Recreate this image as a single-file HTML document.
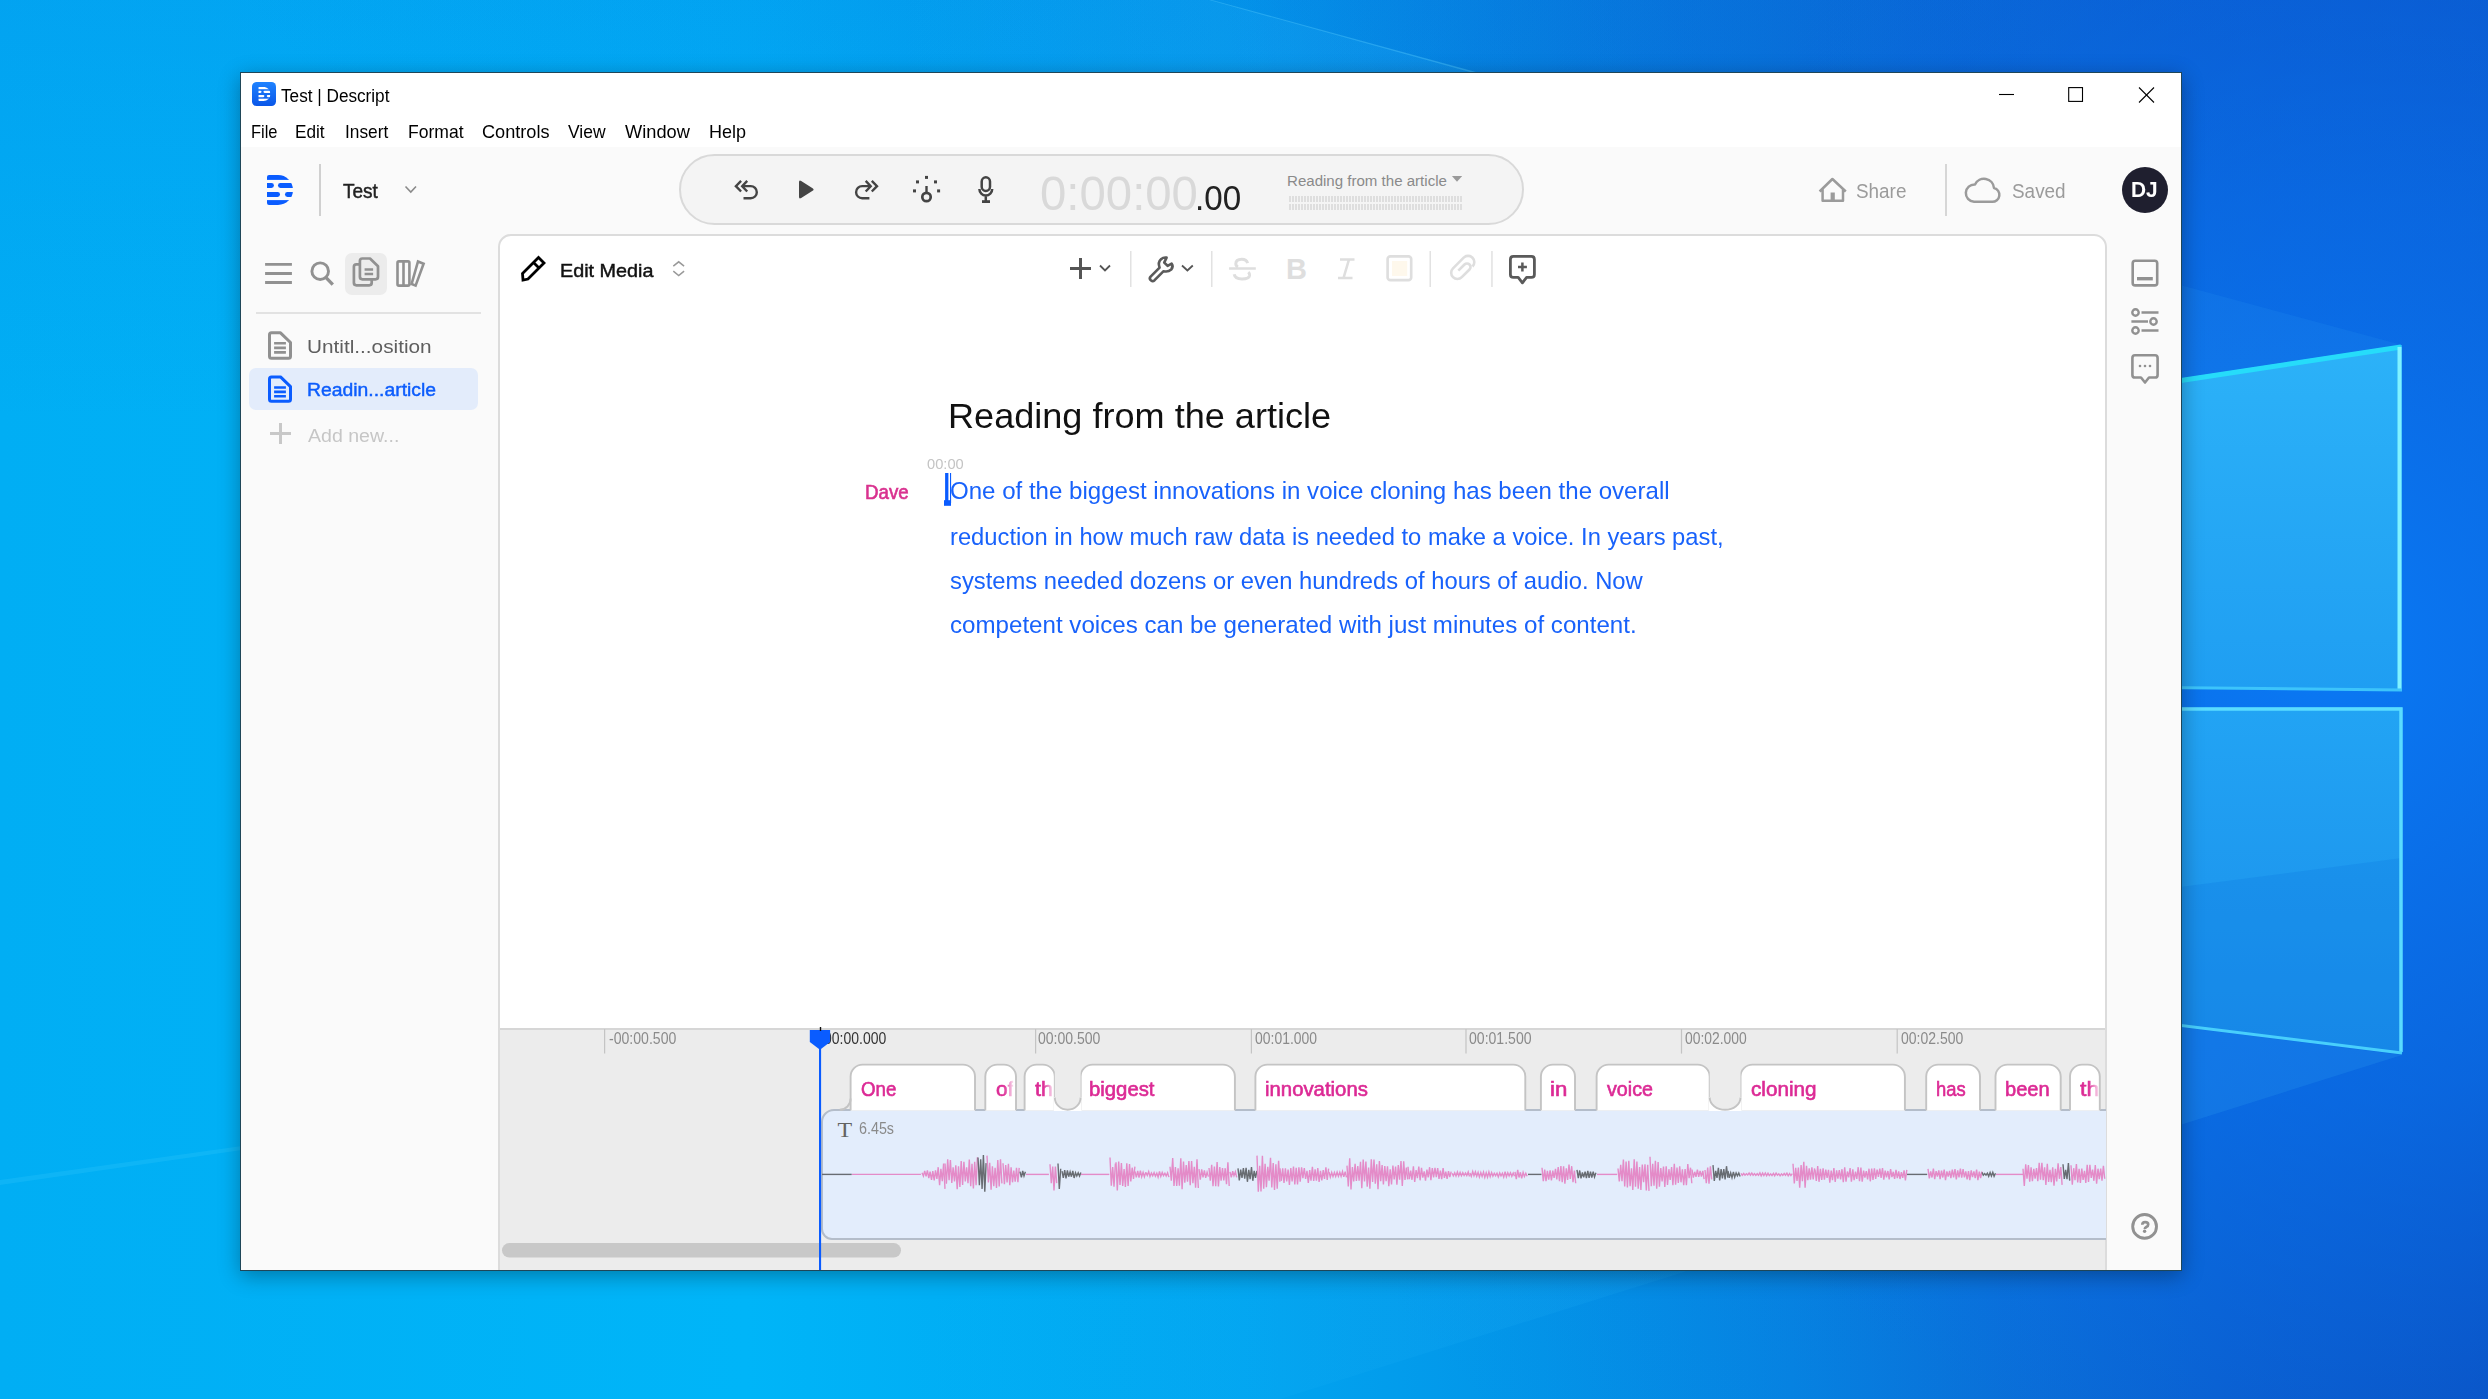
<!DOCTYPE html>
<html><head><meta charset="utf-8">
<style>
*{box-sizing:border-box;margin:0;padding:0}
html,body{width:2488px;height:1399px;overflow:hidden}
body{position:relative;font-family:"Liberation Sans",sans-serif;background:#0a7ede}
.a{position:absolute}
.t{position:absolute;white-space:nowrap;line-height:1;transform-origin:0 0;font-family:"Liberation Sans",sans-serif}
#wall{position:absolute;left:0;top:0;width:2488px;height:1399px;overflow:hidden;
background:linear-gradient(to right,#03a2ec 0%,#01aaf0 20%,#02a6ee 45%,#0496e8 60%,#0878dc 75%,#0a5fd0 88%,#0a55c8 100%)}
#frame{position:absolute;left:240px;top:72px;width:1942px;height:1199px;background:#fafafa;border:1px solid #1f4658;box-shadow:0 5px 20px rgba(0,0,0,0.32)}
#clip{position:absolute;left:241px;top:73px;width:1940px;height:1197px;overflow:hidden}
#app{position:absolute;left:-241px;top:-73px;width:2488px;height:1399px}
svg{position:absolute;overflow:visible}
</style></head>
<body>
<div id="wall"><svg width="2488" height="1399" viewBox="0 0 2488 1399" style="left:0;top:0">
<defs>
<linearGradient id="gbase" x1="0" y1="0" x2="1" y2="0">
 <stop offset="0" stop-color="#01aef4"/>
 <stop offset="0.3" stop-color="#00b5f8"/>
 <stop offset="0.5" stop-color="#01a5f0"/>
 <stop offset="0.62" stop-color="#0394e8"/>
 <stop offset="0.72" stop-color="#0684e2"/>
 <stop offset="0.82" stop-color="#0a6ed8"/>
 <stop offset="0.9" stop-color="#0a5ecf"/>
 <stop offset="1" stop-color="#0a52c4"/>
</linearGradient>
<linearGradient id="gray2" x1="900" y1="0" x2="1500" y2="0" gradientUnits="userSpaceOnUse">
 <stop offset="0" stop-color="#30c0ff" stop-opacity="0"/>
 <stop offset="1" stop-color="#30c0ff" stop-opacity="0.10"/>
</linearGradient>
<linearGradient id="gray1" x1="900" y1="0" x2="1300" y2="0" gradientUnits="userSpaceOnUse">
 <stop offset="0" stop-color="#30c0ff" stop-opacity="0"/>
 <stop offset="1" stop-color="#30c0ff" stop-opacity="0.14"/>
</linearGradient>
<linearGradient id="gtop" x1="0" y1="0" x2="0" y2="1">
 <stop offset="0" stop-color="#0a6ae0" stop-opacity="0.16"/>
 <stop offset="0.3" stop-color="#0a6ae0" stop-opacity="0"/>
 <stop offset="1" stop-color="#0a6ae0" stop-opacity="0"/>
</linearGradient>
<linearGradient id="gdiag" x1="2488" y1="0" x2="900" y2="1399" gradientUnits="userSpaceOnUse">
 <stop offset="0" stop-color="#0a5cd0" stop-opacity="0.3"/>
 <stop offset="0.45" stop-color="#0a60d0" stop-opacity="0.16"/>
 <stop offset="0.8" stop-color="#0a60d0" stop-opacity="0"/>
</linearGradient>
<radialGradient id="gtr" cx="2300" cy="-200" r="1100" gradientUnits="userSpaceOnUse">
 <stop offset="0" stop-color="#0a50c8" stop-opacity="0.5"/>
 <stop offset="0.6" stop-color="#0a58cc" stop-opacity="0.3"/>
 <stop offset="1" stop-color="#0a58cc" stop-opacity="0"/>
</radialGradient>
<radialGradient id="glight" cx="2330" cy="650" r="820" gradientUnits="userSpaceOnUse">
 <stop offset="0" stop-color="#0a7cf8" stop-opacity="0.9"/>
 <stop offset="0.55" stop-color="#0a74f2" stop-opacity="0.55"/>
 <stop offset="1" stop-color="#0a70ee" stop-opacity="0"/>
</radialGradient>
<linearGradient id="gpane1" x1="0" y1="0" x2="0" y2="1">
 <stop offset="0" stop-color="#2cb2f8"/>
 <stop offset="1" stop-color="#1f9ef2"/>
</linearGradient>
<linearGradient id="gpane2" x1="0" y1="0" x2="0" y2="1">
 <stop offset="0" stop-color="#22a4f4"/>
 <stop offset="1" stop-color="#1a8eea"/>
</linearGradient>
</defs>
<rect width="2488" height="1399" fill="url(#gbase)"/>
<rect width="2488" height="1399" fill="url(#gdiag)"/>
<rect width="2488" height="1399" fill="url(#gtr)"/>
<rect width="2488" height="1399" fill="url(#glight)"/>
<rect width="2488" height="1399" fill="url(#gtop)"/>
<!-- right side deep blue -->

<!-- rays -->
<polygon points="1209,0 1474,72 900,72 800,0" fill="url(#gray1)"/>
<polygon points="1209,0 1212,0 1476,72 1470,72" fill="#5fd0ff" opacity="0.35"/>
<polygon points="1280,1399 1690,1270 1000,1270 800,1399" fill="url(#gray2)"/>
<polygon points="2180,285 2402,345 2402,360 2180,400" fill="#2a9af0" opacity="0.16"/>
<polygon points="0,1180 242,1146 242,1150 0,1185" fill="#50d4ff" opacity="0.18"/>
<!-- windows logo panes -->
<polygon points="2000,406 2402,345 2402,690.5 2000,684" fill="url(#gpane1)"/>
<polygon points="2000,708 2402,707 2402,1053.8 2000,1002" fill="url(#gpane2)"/>
<polygon points="2180,887 2402,858 2402,1053.8 2180,1025" fill="#0a70e0" opacity="0.22"/>
<polygon points="2180,1027 2402,1055 2180,1125" fill="#2a9af0" opacity="0.25"/>
<!-- bright edges -->
<polyline points="2000,408 2401,347" fill="none" stroke="#26dcfa" stroke-width="5"/>
<polyline points="2399.5,347 2399.5,690" fill="none" stroke="#80f2ff" stroke-width="4"/>
<polyline points="2000,686 2402,690" fill="none" stroke="#3cc4fb" stroke-width="3"/>
<polyline points="2000,709 2401,709 2401,1052" fill="none" stroke="#5adcff" stroke-width="3.5"/>
<polyline points="2000,1003 2402,1053" fill="none" stroke="#48cffc" stroke-width="3"/>
</svg></div>
<div id="frame"></div>
<div id="clip"><div id="app">
  <div class="a" style="left:241px;top:73px;width:1940px;height:74px;background:#fff"></div>
  <div class="a" style="left:241px;top:147px;width:1940px;height:1130px;background:#fafafa"></div>
  <!-- transport pill -->
  <div class="a" style="left:679px;top:154px;width:845px;height:71px;background:#f4f4f4;border:2px solid #d9d9d9;border-radius:36px"></div>
  <div class="a" style="left:1289px;top:196px;width:174px;height:5.9px;background:repeating-linear-gradient(to right,#dedede 0,#dedede 2px,transparent 2px,transparent 3px)"></div><div class="a" style="left:1289px;top:204.2px;width:174px;height:5.7px;background:repeating-linear-gradient(to right,#dedede 0,#dedede 2px,transparent 2px,transparent 3px)"></div>
  <!-- editor panel -->
  <div class="a" style="left:498px;top:234px;width:1609px;height:1060px;background:#fff;border:2px solid #dcdcdc;border-radius:13px 13px 0 0;overflow:hidden">
    <div class="a" style="left:0;top:792px;width:1607px;height:300px;background:#ececec;border-top:2px solid #d6d6d6"></div>
  </div>
  <!-- sidebar divider -->
  <div class="a" style="left:256px;top:312px;width:225px;height:2px;background:#e2e2e2"></div>
  <div class="a" style="left:249px;top:368px;width:229px;height:42px;background:#e3ecfb;border-radius:7px"></div>
  <div class="a" style="left:345px;top:253px;width:42px;height:42px;background:#ececec;border-radius:7px"></div>
  <!-- header dividers -->
  <div class="a" style="left:319px;top:164px;width:2px;height:52px;background:#d0d0d0"></div>
  <div class="a" style="left:1945px;top:164px;width:2px;height:52px;background:#d6d6d6"></div>
  <div class="a" style="left:2122px;top:167px;width:46px;height:46px;border-radius:50%;background:#1f1f2f"></div>
<svg width="2488" height="1399" viewBox="0 0 2488 1399" style="left:0;top:0">
<defs><clipPath id="tlclip"><rect x="500" y="1029" width="1606" height="245"/></clipPath></defs>
<g clip-path="url(#tlclip)">
<g stroke="#c4c4c4" stroke-width="1.2"><line x1="604.6" y1="1029" x2="604.6" y2="1053.6"/><line x1="1035.6" y1="1029" x2="1035.6" y2="1053.6"/><line x1="1251.4" y1="1029" x2="1251.4" y2="1053.6"/><line x1="1466" y1="1029" x2="1466" y2="1053.6"/><line x1="1681.5" y1="1029" x2="1681.5" y2="1053.6"/><line x1="1897.2" y1="1029" x2="1897.2" y2="1053.6"/></g>
<path d="M822,1229 V1122 A12,12 0 0 1 834,1110 H2120 V1239 H832 A10,10 0 0 1 822,1229 Z" fill="#e3edfc" stroke="#b4bdca" stroke-width="2"/>
<path d="M850.6,1110.8 V1076.6 A12,12 0 0 1 862.6,1064.6 H963.0 A12,12 0 0 1 975.0,1076.6 V1110.8 Z M985.3,1110.8 V1076.6 A12,12 0 0 1 997.3,1064.6 H1004.0 A12,12 0 0 1 1016.0,1076.6 V1110.8 Z M1024.6,1110.8 V1076.6 A12,12 0 0 1 1036.6,1064.6 H1042.8 A12,12 0 0 1 1054.8,1076.6 V1110.8 Z M1080.6,1110.8 V1076.6 A12,12 0 0 1 1092.6,1064.6 H1222.9 A12,12 0 0 1 1234.9,1076.6 V1110.8 Z M1255.4,1110.8 V1076.6 A12,12 0 0 1 1267.4,1064.6 H1513.3 A12,12 0 0 1 1525.3,1076.6 V1110.8 Z M1540.9,1110.8 V1076.6 A12,12 0 0 1 1552.9,1064.6 H1563.0 A12,12 0 0 1 1575.0,1076.6 V1110.8 Z M1596.6,1110.8 V1076.6 A12,12 0 0 1 1608.6,1064.6 H1697.7 A12,12 0 0 1 1709.7,1076.6 V1110.8 Z M1740.5,1110.8 V1076.6 A12,12 0 0 1 1752.5,1064.6 H1892.9 A12,12 0 0 1 1904.9,1076.6 V1110.8 Z M1926.2,1110.8 V1076.6 A12,12 0 0 1 1938.2,1064.6 H1968.0 A12,12 0 0 1 1980.0,1076.6 V1110.8 Z M1995.5,1110.8 V1076.6 A12,12 0 0 1 2007.5,1064.6 H2048.7 A12,12 0 0 1 2060.7,1076.6 V1110.8 Z M2070.0,1110.8 V1076.6 A12,12 0 0 1 2082.0,1064.6 H2087.8 A12,12 0 0 1 2099.8,1076.6 V1110.8 Z" fill="#fff"/>
<path d="M850.6,1110.3 V1076.6 A12,12 0 0 1 862.6,1064.6 H963.0 A12,12 0 0 1 975.0,1076.6 V1110.3 M985.3,1110.3 V1076.6 A12,12 0 0 1 997.3,1064.6 H1004.0 A12,12 0 0 1 1016.0,1076.6 V1110.3 M1024.6,1110.3 V1076.6 A12,12 0 0 1 1036.6,1064.6 H1042.8 A12,12 0 0 1 1054.8,1076.6 V1110.3 M1080.6,1110.3 V1076.6 A12,12 0 0 1 1092.6,1064.6 H1222.9 A12,12 0 0 1 1234.9,1076.6 V1110.3 M1255.4,1110.3 V1076.6 A12,12 0 0 1 1267.4,1064.6 H1513.3 A12,12 0 0 1 1525.3,1076.6 V1110.3 M1540.9,1110.3 V1076.6 A12,12 0 0 1 1552.9,1064.6 H1563.0 A12,12 0 0 1 1575.0,1076.6 V1110.3 M1596.6,1110.3 V1076.6 A12,12 0 0 1 1608.6,1064.6 H1697.7 A12,12 0 0 1 1709.7,1076.6 V1110.3 M1740.5,1110.3 V1076.6 A12,12 0 0 1 1752.5,1064.6 H1892.9 A12,12 0 0 1 1904.9,1076.6 V1110.3 M1926.2,1110.3 V1076.6 A12,12 0 0 1 1938.2,1064.6 H1968.0 A12,12 0 0 1 1980.0,1076.6 V1110.3 M1995.5,1110.3 V1076.6 A12,12 0 0 1 2007.5,1064.6 H2048.7 A12,12 0 0 1 2060.7,1076.6 V1110.3 M2070.0,1110.3 V1076.6 A12,12 0 0 1 2082.0,1064.6 H2087.8 A12,12 0 0 1 2099.8,1076.6 V1110.3" fill="none" stroke="#c4c4c4" stroke-width="1.9"/>
<path d="M850.6,1098.5 A11,11 0 0 1 839.6,1109.8" fill="none" stroke="#c4c4c4" stroke-width="1.9"/>
<rect x="1053.8" y="1097" width="27.8" height="14" fill="#fff"/><path d="M1054.8,1060 V1097.5 A12.9,12.3 0 0 0 1080.6,1097.5 V1060 Z" fill="#ececec"/><path d="M1054.8,1097.5 A12.9,12.3 0 0 0 1080.6,1097.5" fill="none" stroke="#c4c4c4" stroke-width="1.9"/>
<rect x="1708.7" y="1097" width="32.8" height="14" fill="#fff"/><path d="M1709.7,1060 V1097.5 A15.4,12.3 0 0 0 1740.5,1097.5 V1060 Z" fill="#ececec"/><path d="M1709.7,1097.5 A15.4,12.3 0 0 0 1740.5,1097.5" fill="none" stroke="#c4c4c4" stroke-width="1.9"/>
<text x="837.5" y="1136.7" font-family="Liberation Serif" font-size="20.5" fill="#626262" transform="translate(837.5,0) scale(1.17,1) translate(-837.5,0)">T</text>
<path d="M822.0,1174.4 L823.4,1174.4 L824.7,1174.4 L826.1,1174.4 L827.4,1174.4 L828.8,1174.4 L830.1,1174.4 L831.5,1174.4 L832.8,1174.4 L834.2,1174.4 L835.5,1174.4 L836.9,1174.4 L838.2,1174.4 L839.6,1174.4 L840.9,1174.4 L842.3,1174.4 L843.6,1174.4 L845.0,1174.4 L846.3,1174.4 L847.7,1174.4 L849.0,1174.4 L850.4,1174.4 L851.7,1174.4" stroke="#686c72" stroke-width="1.4" fill="none"/>
<path d="M852.0,1174.4 L853.4,1174.4 L854.7,1174.4 L856.1,1174.4 L857.4,1174.4 L858.8,1174.4 L860.1,1174.4 L861.5,1174.4 L862.8,1174.4 L864.2,1174.4 L865.5,1174.4 L866.9,1174.4 L868.2,1174.4 L869.6,1174.4 L870.9,1174.4 L872.3,1174.4 L873.6,1174.4 L875.0,1174.4 L876.3,1174.4 L877.7,1174.4 L879.0,1174.4 L880.4,1174.4 L881.7,1174.4 L883.1,1174.4 L884.4,1174.4 L885.8,1174.4 L887.1,1174.4 L888.5,1174.4 L889.8,1174.4 L891.2,1174.4 L892.5,1174.4 L893.9,1174.4 L895.2,1174.4 L896.6,1174.4 L897.9,1174.4 L899.3,1174.4 L900.6,1174.4 L902.0,1174.4 L903.3,1174.4 L904.7,1174.4 L906.0,1174.4 L907.4,1174.4 L908.7,1174.4 L910.1,1174.4 L911.4,1174.4 L912.8,1174.4 L914.1,1174.4 L915.5,1174.4 L916.8,1174.4 L918.2,1174.4 L919.5,1174.4 L920.9,1174.4" stroke="#e48bc8" stroke-width="1.4" fill="none"/>
<path d="M922.0,1172.7 L923.4,1176.1 L924.7,1171.0 L926.1,1176.4 L927.4,1170.3 L928.8,1178.2 L930.1,1171.6 L931.5,1179.8 L932.8,1171.2 L934.2,1180.3 L935.5,1170.4 L936.9,1178.8 L938.2,1167.2 L939.6,1185.2 L940.9,1168.9 L942.3,1181.1 L943.6,1163.6 L945.0,1188.9" stroke="#e48bc8" stroke-width="1.4" fill="none"/>
<path d="M945.0,1163.5 L946.4,1183.6 L947.7,1159.2 L949.1,1180.3 L950.4,1160.0 L951.8,1183.0 L953.1,1167.2 L954.5,1181.4 L955.8,1165.2 L957.2,1189.2 L958.5,1166.4 L959.9,1187.0 L961.2,1161.0 L962.6,1184.9 L963.9,1161.8 L965.3,1181.5 L966.6,1167.3 L968.0,1183.3 L969.3,1159.6 L970.7,1186.3 L972.0,1163.8 L973.4,1188.5 L974.7,1161.8 L976.1,1185.1 L977.4,1157.2" stroke="#e48bc8" stroke-width="1.4" fill="none"/>
<path d="M978.0,1157.5 L979.4,1185.1 L980.7,1159.2 L982.1,1188.9 L983.4,1155.1 L984.8,1191.7 L986.1,1163.1" stroke="#686c72" stroke-width="1.4" fill="none"/>
<path d="M987.0,1155.6 L988.4,1182.4 L989.7,1162.9 L991.1,1189.8 L992.4,1166.3 L993.8,1186.2 L995.1,1167.8 L996.5,1187.9 L997.8,1160.0 L999.2,1186.5 L1000.5,1159.3 L1001.9,1183.4" stroke="#e48bc8" stroke-width="1.4" fill="none"/>
<path d="M1003.0,1163.2 L1004.4,1184.3 L1005.7,1165.0 L1007.1,1182.4 L1008.4,1163.8 L1009.8,1185.2 L1011.1,1167.4 L1012.5,1182.3 L1013.8,1170.7 L1015.2,1181.7 L1016.5,1167.9 L1017.9,1182.2 L1019.2,1167.9" stroke="#e48bc8" stroke-width="1.4" fill="none"/>
<path d="M1020.0,1171.7 L1021.4,1177.3 L1022.7,1170.8 L1024.0,1176.0 L1025.4,1171.7" stroke="#686c72" stroke-width="1.4" fill="none"/>
<path d="M1026.0,1174.4 L1027.3,1174.4 L1028.7,1174.4 L1030.0,1174.4 L1031.4,1174.4 L1032.7,1174.4 L1034.1,1174.4 L1035.4,1174.4 L1036.8,1174.4 L1038.1,1174.4 L1039.5,1174.4 L1040.8,1174.4 L1042.2,1174.4 L1043.5,1174.4 L1044.9,1174.4 L1046.2,1174.4 L1047.6,1174.4 L1048.9,1174.4" stroke="#e48bc8" stroke-width="1.4" fill="none"/>
<path d="M1050.0,1164.3 L1051.3,1183.3 L1052.7,1166.6 L1054.0,1190.5 L1055.4,1166.6 L1056.7,1183.1" stroke="#e48bc8" stroke-width="1.4" fill="none"/>
<path d="M1058.0,1163.5 L1059.3,1189.0 L1060.7,1168.8" stroke="#686c72" stroke-width="1.4" fill="none"/>
<path d="M1062.0,1171.2 L1063.3,1177.8 L1064.7,1170.0 L1066.0,1178.4 L1067.4,1170.4 L1068.7,1176.7 L1070.1,1171.8 L1071.4,1176.7 L1072.8,1170.8 L1074.1,1178.0 L1075.5,1172.8 L1076.8,1176.0 L1078.2,1172.8 L1079.5,1176.0 L1080.9,1172.4" stroke="#686c72" stroke-width="1.4" fill="none"/>
<path d="M1081.0,1174.4 L1082.3,1174.4 L1083.7,1174.4 L1085.0,1174.4 L1086.4,1174.4 L1087.7,1174.4 L1089.1,1174.4 L1090.4,1174.4 L1091.8,1174.4 L1093.1,1174.4 L1094.5,1174.4 L1095.8,1174.4 L1097.2,1174.4 L1098.5,1174.4 L1099.9,1174.4 L1101.2,1174.4 L1102.6,1174.4 L1103.9,1174.4 L1105.3,1174.4 L1106.6,1174.4 L1108.0,1174.4 L1109.3,1174.4" stroke="#e48bc8" stroke-width="1.4" fill="none"/>
<path d="M1110.0,1157.5 L1111.3,1185.8 L1112.7,1167.1 L1114.0,1186.6 L1115.4,1163.5" stroke="#e48bc8" stroke-width="1.4" fill="none"/>
<path d="M1116.0,1162.2 L1117.3,1190.4 L1118.7,1161.6 L1120.0,1185.0 L1121.4,1163.1 L1122.7,1185.9 L1124.1,1169.0 L1125.4,1187.0 L1126.8,1163.2 L1128.1,1185.9 L1129.5,1164.0 L1130.8,1181.4 L1132.2,1167.7 L1133.5,1178.8 L1134.9,1166.7" stroke="#e48bc8" stroke-width="1.4" fill="none"/>
<path d="M1135.0,1171.3 L1136.3,1177.4 L1137.7,1170.9 L1139.0,1177.5 L1140.4,1170.7 L1141.7,1176.8 L1143.1,1172.4 L1144.4,1176.8 L1145.8,1172.3" stroke="#e48bc8" stroke-width="1.4" fill="none"/>
<path d="M1146.0,1172.6 L1147.3,1175.5 L1148.7,1171.6 L1150.0,1176.6 L1151.4,1173.1 L1152.7,1175.9 L1154.1,1172.7 L1155.4,1176.2 L1156.8,1173.1 L1158.1,1177.1 L1159.5,1171.4 L1160.8,1176.4 L1162.2,1172.4 L1163.5,1175.6 L1164.9,1173.2 L1166.2,1176.1 L1167.6,1172.8 L1168.9,1177.1" stroke="#e48bc8" stroke-width="1.4" fill="none"/>
<path d="M1170.0,1166.7 L1171.3,1180.6 L1172.7,1158.1 L1174.0,1186.0 L1175.4,1167.0 L1176.7,1186.0 L1178.1,1168.4 L1179.4,1185.7 L1180.8,1158.4 L1182.1,1189.1 L1183.5,1161.5 L1184.8,1182.7 L1186.2,1165.1 L1187.5,1181.6 L1188.9,1161.0 L1190.2,1185.3 L1191.6,1161.1 L1192.9,1183.1 L1194.3,1166.8 L1195.6,1187.8 L1197.0,1159.4 L1198.3,1188.0" stroke="#e48bc8" stroke-width="1.4" fill="none"/>
<path d="M1199.0,1169.2 L1200.3,1179.7 L1201.7,1169.4 L1203.0,1177.4 L1204.4,1170.3 L1205.7,1177.9 L1207.1,1172.2 L1208.4,1176.6" stroke="#e48bc8" stroke-width="1.4" fill="none"/>
<path d="M1209.0,1168.0 L1210.3,1180.7 L1211.7,1164.7 L1213.0,1186.2 L1214.4,1166.5 L1215.7,1186.2 L1217.1,1162.1 L1218.4,1186.5 L1219.8,1167.1 L1221.1,1180.6 L1222.5,1168.1 L1223.8,1180.5 L1225.2,1168.2 L1226.5,1184.1 L1227.9,1162.3 L1229.2,1186.0" stroke="#e48bc8" stroke-width="1.4" fill="none"/>
<path d="M1230.0,1171.8 L1231.3,1177.4 L1232.7,1171.2 L1234.0,1175.8 L1235.4,1171.8 L1236.7,1177.4" stroke="#e48bc8" stroke-width="1.4" fill="none"/>
<path d="M1238.0,1168.4 L1239.3,1180.3 L1240.7,1169.7 L1242.0,1177.8 L1243.4,1168.1 L1244.7,1178.6 L1246.1,1167.9 L1247.4,1181.8 L1248.8,1169.8 L1250.1,1179.1 L1251.5,1167.0 L1252.8,1180.8 L1254.2,1170.8 L1255.5,1177.8 L1256.9,1170.8" stroke="#686c72" stroke-width="1.4" fill="none"/>
<path d="M1257.0,1155.6 L1258.3,1191.6 L1259.7,1165.8 L1261.0,1191.4 L1262.4,1155.8 L1263.7,1188.8 L1265.1,1163.9 L1266.4,1187.1 L1267.8,1166.7 L1269.1,1180.6 L1270.5,1157.7 L1271.8,1187.4 L1273.2,1163.0 L1274.5,1189.9 L1275.9,1164.4 L1277.2,1188.7 L1278.6,1160.8 L1279.9,1181.7" stroke="#e48bc8" stroke-width="1.4" fill="none"/>
<path d="M1280.0,1168.2 L1281.3,1180.8 L1282.7,1168.4 L1284.0,1182.9 L1285.4,1168.4 L1286.7,1181.5 L1288.1,1169.5 L1289.4,1185.0 L1290.8,1168.0 L1292.1,1181.5 L1293.5,1166.5 L1294.8,1184.5 L1296.2,1167.7 L1297.5,1184.4 L1298.9,1167.3 L1300.2,1181.6 L1301.6,1167.3 L1302.9,1178.1 L1304.3,1168.0 L1305.6,1179.0 L1307.0,1170.9 L1308.3,1182.8 L1309.7,1170.0 L1311.0,1180.6 L1312.4,1166.7 L1313.7,1181.0 L1315.1,1169.3 L1316.4,1180.6 L1317.8,1168.1 L1319.1,1182.0 L1320.5,1170.8 L1321.8,1180.5 L1323.2,1170.1 L1324.5,1178.8 L1325.9,1167.4 L1327.2,1179.9 L1328.6,1168.7" stroke="#e48bc8" stroke-width="1.4" fill="none"/>
<path d="M1329.0,1171.9 L1330.3,1177.2 L1331.7,1172.5 L1333.0,1176.6 L1334.4,1172.4 L1335.7,1176.4 L1337.1,1172.0 L1338.4,1176.3 L1339.8,1172.3 L1341.1,1176.4 L1342.5,1171.5 L1343.8,1176.8 L1345.2,1171.6 L1346.5,1177.3" stroke="#e48bc8" stroke-width="1.4" fill="none"/>
<path d="M1347.0,1165.6 L1348.3,1186.5 L1349.7,1158.2 L1351.0,1189.4 L1352.4,1167.1 L1353.7,1181.5 L1355.1,1163.9 L1356.4,1180.9 L1357.8,1166.1 L1359.1,1180.8 L1360.5,1161.7 L1361.8,1188.2 L1363.2,1159.5 L1364.5,1181.5 L1365.9,1161.5 L1367.2,1186.6 L1368.6,1167.5 L1369.9,1188.7 L1371.3,1159.3 L1372.6,1181.9 L1374.0,1159.6 L1375.3,1183.6 L1376.7,1164.4 L1378.0,1189.3 L1379.4,1161.1 L1380.7,1181.1 L1382.1,1165.1 L1383.4,1184.4 L1384.8,1166.1 L1386.1,1181.3 L1387.5,1166.4 L1388.8,1186.1 L1390.2,1169.3 L1391.5,1184.4 L1392.9,1165.5 L1394.2,1179.4 L1395.6,1166.6 L1396.9,1184.8 L1398.3,1165.1 L1399.6,1179.7 L1401.0,1161.1 L1402.3,1185.9 L1403.7,1161.4 L1405.0,1179.9 L1406.4,1167.6 L1407.7,1179.3" stroke="#e48bc8" stroke-width="1.4" fill="none"/>
<path d="M1408.0,1166.7 L1409.3,1179.1 L1410.7,1170.6 L1412.0,1179.8 L1413.4,1166.3 L1414.7,1181.9 L1416.1,1170.0 L1417.4,1178.1 L1418.8,1166.6 L1420.1,1180.3 L1421.5,1167.9 L1422.8,1177.7 L1424.2,1171.3 L1425.5,1180.6 L1426.9,1169.6 L1428.2,1177.4 L1429.6,1167.2 L1430.9,1180.1 L1432.3,1168.0 L1433.6,1177.3 L1435.0,1167.9 L1436.3,1177.2 L1437.7,1168.0 L1439.0,1178.8 L1440.4,1170.5 L1441.7,1179.2 L1443.1,1168.1 L1444.4,1177.8 L1445.8,1171.6 L1447.1,1178.8 L1448.5,1171.2 L1449.8,1177.0 L1451.2,1171.6" stroke="#e48bc8" stroke-width="1.4" fill="none"/>
<path d="M1452.0,1173.3 L1453.3,1175.8 L1454.7,1172.7 L1456.0,1176.0 L1457.4,1171.9 L1458.7,1176.0 L1460.1,1172.4 L1461.4,1175.8 L1462.8,1172.7 L1464.1,1175.5 L1465.5,1172.9 L1466.8,1175.5 L1468.2,1171.9 L1469.5,1176.5" stroke="#e48bc8" stroke-width="1.4" fill="none"/>
<path d="M1470.0,1173.0 L1471.3,1176.4 L1472.7,1171.5 L1474.0,1175.7 L1475.4,1171.8 L1476.7,1176.3 L1478.1,1172.4 L1479.4,1177.1 L1480.8,1172.6 L1482.1,1176.4 L1483.5,1172.0 L1484.8,1177.4 L1486.2,1172.7 L1487.5,1177.1 L1488.9,1172.0 L1490.2,1176.7 L1491.6,1172.6 L1492.9,1176.1 L1494.3,1173.2 L1495.6,1175.7 L1497.0,1173.2 L1498.3,1176.9 L1499.7,1172.9 L1501.0,1175.8 L1502.4,1173.2 L1503.7,1177.1 L1505.1,1171.7 L1506.4,1176.8 L1507.8,1172.8 L1509.1,1175.9 L1510.5,1172.8 L1511.8,1176.3 L1513.2,1173.0 L1514.5,1176.3" stroke="#e48bc8" stroke-width="1.4" fill="none"/>
<path d="M1515.0,1171.8 L1516.3,1179.1 L1517.7,1169.9 L1519.0,1177.5 L1520.4,1172.3 L1521.7,1178.3 L1523.1,1172.3 L1524.4,1176.5 L1525.8,1173.2 L1527.1,1176.3" stroke="#e48bc8" stroke-width="1.4" fill="none"/>
<path d="M1528.0,1174.4 L1529.3,1174.4 L1530.7,1174.4 L1532.0,1174.4 L1533.4,1174.4 L1534.7,1174.4 L1536.1,1174.4 L1537.4,1174.4 L1538.8,1174.4 L1540.1,1174.4 L1541.5,1174.4" stroke="#686c72" stroke-width="1.4" fill="none"/>
<path d="M1542.0,1167.8 L1543.3,1181.2 L1544.7,1169.6 L1546.0,1181.2 L1547.4,1170.9 L1548.7,1179.6 L1550.1,1170.3 L1551.4,1180.5 L1552.8,1170.6 L1554.1,1178.0 L1555.5,1168.9 L1556.8,1179.4 L1558.2,1167.1 L1559.5,1181.3 L1560.9,1166.0 L1562.2,1182.2 L1563.6,1166.2 L1564.9,1183.6 L1566.3,1168.4 L1567.6,1180.0 L1569.0,1164.5 L1570.3,1178.9 L1571.7,1166.2 L1573.0,1182.1 L1574.4,1170.6 L1575.7,1183.3" stroke="#e48bc8" stroke-width="1.4" fill="none"/>
<path d="M1577.0,1169.8 L1578.3,1178.1 L1579.7,1170.5 L1581.0,1178.4 L1582.4,1172.4 L1583.7,1177.4 L1585.1,1171.6 L1586.4,1178.0 L1587.8,1171.0 L1589.1,1177.8 L1590.5,1171.7 L1591.8,1177.7 L1593.2,1171.7 L1594.5,1177.0 L1595.9,1172.8" stroke="#686c72" stroke-width="1.4" fill="none"/>
<path d="M1597.0,1174.4 L1598.3,1174.4 L1599.7,1174.4 L1601.0,1174.4 L1602.4,1174.4 L1603.7,1174.4 L1605.1,1174.4 L1606.4,1174.4 L1607.8,1174.4 L1609.1,1174.4 L1610.5,1174.4 L1611.8,1174.4 L1613.2,1174.4 L1614.5,1174.4 L1615.9,1174.4 L1617.2,1174.4" stroke="#e48bc8" stroke-width="1.4" fill="none"/>
<path d="M1618.0,1168.5 L1619.3,1181.5 L1620.7,1164.9 L1622.0,1181.3 L1623.4,1159.5 L1624.7,1186.4 L1626.1,1161.5 L1627.4,1187.4 L1628.8,1160.7 L1630.1,1186.1 L1631.5,1168.2 L1632.8,1189.9 L1634.2,1159.3 L1635.5,1186.7 L1636.9,1161.6 L1638.2,1188.8 L1639.6,1167.1 L1640.9,1190.0 L1642.3,1164.6 L1643.6,1182.1 L1645.0,1164.3 L1646.3,1190.5 L1647.7,1164.9 L1649.0,1190.9" stroke="#e48bc8" stroke-width="1.4" fill="none"/>
<path d="M1650.0,1156.7 L1651.3,1186.3 L1652.7,1163.9 L1654.0,1185.8 L1655.4,1160.9 L1656.7,1188.6 L1658.1,1162.0 L1659.4,1186.8 L1660.8,1168.0 L1662.1,1181.4 L1663.5,1166.5 L1664.8,1187.0 L1666.2,1166.2 L1667.5,1184.9 L1668.9,1169.2 L1670.2,1179.9 L1671.6,1167.1 L1672.9,1185.1 L1674.3,1163.7 L1675.6,1184.7 L1677.0,1167.5 L1678.3,1183.0 L1679.7,1166.4 L1681.0,1182.3 L1682.4,1169.3 L1683.7,1185.2 L1685.1,1169.0 L1686.4,1185.3 L1687.8,1164.0 L1689.1,1178.2 L1690.5,1167.7 L1691.8,1183.3" stroke="#e48bc8" stroke-width="1.4" fill="none"/>
<path d="M1692.0,1169.5 L1693.3,1177.6 L1694.7,1171.8 L1696.0,1176.8 L1697.4,1169.6 L1698.7,1176.8 L1700.1,1170.8 L1701.4,1176.6 L1702.8,1170.9 L1704.1,1179.2" stroke="#e48bc8" stroke-width="1.4" fill="none"/>
<path d="M1705.0,1170.0 L1706.3,1183.2 L1707.7,1167.6 L1709.0,1183.7 L1710.4,1166.3 L1711.7,1179.4" stroke="#e48bc8" stroke-width="1.4" fill="none"/>
<path d="M1713.0,1165.1 L1714.3,1181.0 L1715.7,1170.8 L1717.0,1177.8 L1718.4,1167.9 L1719.7,1180.5 L1721.1,1169.2 L1722.4,1178.5 L1723.8,1169.1 L1725.1,1179.5 L1726.5,1166.2 L1727.8,1177.6" stroke="#686c72" stroke-width="1.4" fill="none"/>
<path d="M1728.0,1171.0 L1729.3,1177.8 L1730.7,1172.9 L1732.0,1177.6 L1733.4,1171.8 L1734.7,1177.2 L1736.1,1172.9 L1737.4,1175.9 L1738.8,1173.0 L1740.1,1176.5" stroke="#686c72" stroke-width="1.4" fill="none"/>
<path d="M1741.0,1173.3 L1742.3,1175.3 L1743.7,1173.5 L1745.0,1175.2 L1746.4,1173.8 L1747.7,1175.0 L1749.1,1173.1 L1750.4,1175.2 L1751.8,1173.0 L1753.1,1175.2 L1754.5,1173.6 L1755.8,1175.4 L1757.2,1173.7 L1758.5,1175.3 L1759.9,1172.9 L1761.2,1175.8 L1762.6,1173.1 L1763.9,1175.5 L1765.3,1173.0 L1766.6,1175.8 L1768.0,1173.3 L1769.3,1175.6 L1770.7,1173.8 L1772.0,1175.6 L1773.4,1173.4 L1774.7,1175.7 L1776.1,1173.2 L1777.4,1175.2 L1778.8,1173.8 L1780.1,1175.8 L1781.5,1173.8 L1782.8,1175.4 L1784.2,1173.5 L1785.5,1175.2 L1786.9,1173.2 L1788.2,1175.9 L1789.6,1173.6 L1790.9,1175.6 L1792.3,1173.6" stroke="#e48bc8" stroke-width="1.4" fill="none"/>
<path d="M1793.0,1163.7 L1794.3,1183.4 L1795.7,1167.7 L1797.0,1181.0 L1798.4,1167.5 L1799.7,1187.6 L1801.1,1165.0 L1802.4,1181.2 L1803.8,1161.7 L1805.1,1187.7 L1806.5,1165.9 L1807.8,1180.1 L1809.2,1168.3 L1810.5,1179.6 L1811.9,1167.3 L1813.2,1179.4 L1814.6,1168.3" stroke="#e48bc8" stroke-width="1.4" fill="none"/>
<path d="M1815.0,1169.7 L1816.3,1180.9 L1817.7,1166.1 L1819.0,1181.8 L1820.4,1168.9 L1821.7,1179.8 L1823.1,1168.4 L1824.4,1179.6 L1825.8,1169.5 L1827.1,1177.8 L1828.5,1169.9 L1829.8,1182.7 L1831.2,1170.7 L1832.5,1180.1 L1833.9,1168.0 L1835.2,1182.0 L1836.6,1170.3 L1837.9,1178.7 L1839.3,1170.2 L1840.6,1179.4 L1842.0,1169.2 L1843.3,1182.2 L1844.7,1167.2 L1846.0,1181.7 L1847.4,1171.5 L1848.7,1177.3 L1850.1,1168.0 L1851.4,1181.7 L1852.8,1169.3 L1854.1,1180.1 L1855.5,1171.7 L1856.8,1179.0 L1858.2,1167.2 L1859.5,1181.1 L1860.9,1167.6 L1862.2,1181.7 L1863.6,1170.6 L1864.9,1177.5 L1866.3,1171.1 L1867.6,1179.4 L1869.0,1168.7 L1870.3,1181.3 L1871.7,1168.5 L1873.0,1179.9 L1874.4,1168.4 L1875.7,1178.9 L1877.1,1169.5 L1878.4,1177.0 L1879.8,1168.5 L1881.1,1177.8 L1882.5,1168.0 L1883.8,1179.6 L1885.2,1170.7 L1886.5,1177.3 L1887.9,1171.0 L1889.2,1179.4 L1890.6,1169.1 L1891.9,1177.1 L1893.3,1171.8 L1894.6,1178.8 L1896.0,1169.8 L1897.3,1178.2 L1898.7,1171.3 L1900.0,1179.0 L1901.4,1172.2 L1902.7,1177.8 L1904.1,1170.4 L1905.4,1180.3 L1906.8,1169.8" stroke="#e48bc8" stroke-width="1.4" fill="none"/>
<path d="M1907.0,1174.4 L1908.3,1174.4 L1909.7,1174.4 L1911.0,1174.4 L1912.4,1174.4 L1913.7,1174.4 L1915.1,1174.4 L1916.4,1174.4 L1917.8,1174.4 L1919.1,1174.4 L1920.5,1174.4 L1921.8,1174.4 L1923.2,1174.4 L1924.5,1174.4 L1925.9,1174.4 L1927.2,1174.4" stroke="#686c72" stroke-width="1.4" fill="none"/>
<path d="M1928.0,1168.9 L1929.3,1178.4 L1930.7,1171.4 L1932.0,1177.5 L1933.4,1168.6 L1934.7,1179.2 L1936.1,1171.1 L1937.4,1176.6 L1938.8,1170.4 L1940.1,1179.1 L1941.5,1170.7 L1942.8,1177.5 L1944.2,1169.7 L1945.5,1180.1 L1946.9,1171.4 L1948.2,1176.6 L1949.6,1171.0 L1950.9,1178.1 L1952.3,1169.6 L1953.6,1177.3 L1955.0,1169.2 L1956.3,1179.4 L1957.7,1170.3 L1959.0,1177.3 L1960.4,1168.5 L1961.7,1177.7 L1963.1,1169.1 L1964.4,1177.4 L1965.8,1171.4 L1967.1,1179.5 L1968.5,1171.1 L1969.8,1180.2 L1971.2,1170.4 L1972.5,1177.2 L1973.9,1171.4 L1975.2,1178.1 L1976.6,1169.7 L1977.9,1180.2 L1979.3,1171.7 L1980.6,1178.0 L1982.0,1171.5" stroke="#e48bc8" stroke-width="1.4" fill="none"/>
<path d="M1982.0,1172.4 L1983.3,1175.3 L1984.7,1173.6 L1986.0,1175.2 L1987.4,1173.2 L1988.7,1176.3 L1990.1,1172.6 L1991.4,1176.1 L1992.8,1172.4 L1994.1,1176.3 L1995.5,1173.3" stroke="#686c72" stroke-width="1.4" fill="none"/>
<path d="M1996.0,1174.4 L1997.3,1174.4 L1998.7,1174.4 L2000.0,1174.4 L2001.4,1174.4 L2002.7,1174.4 L2004.1,1174.4 L2005.4,1174.4 L2006.8,1174.4 L2008.1,1174.4 L2009.5,1174.4 L2010.8,1174.4 L2012.2,1174.4 L2013.5,1174.4 L2014.9,1174.4 L2016.2,1174.4 L2017.6,1174.4 L2018.9,1174.4 L2020.3,1174.4 L2021.6,1174.4 L2023.0,1174.4" stroke="#e48bc8" stroke-width="1.4" fill="none"/>
<path d="M2023.0,1168.8 L2024.3,1185.9 L2025.7,1164.4 L2027.0,1178.8 L2028.4,1165.0 L2029.7,1181.6 L2031.1,1167.3 L2032.4,1181.2 L2033.8,1168.9 L2035.1,1178.6 L2036.5,1168.0 L2037.8,1181.3 L2039.2,1162.7 L2040.5,1179.6 L2041.9,1162.7 L2043.2,1180.2 L2044.6,1167.4 L2045.9,1185.0 L2047.3,1163.8 L2048.6,1182.0 L2050.0,1169.8 L2051.3,1182.3 L2052.7,1167.3 L2054.0,1185.8 L2055.4,1168.7 L2056.7,1181.4 L2058.1,1163.2 L2059.4,1178.8 L2060.8,1167.0 L2062.1,1184.9" stroke="#e48bc8" stroke-width="1.4" fill="none"/>
<path d="M2063.0,1164.2 L2064.3,1178.9 L2065.7,1169.9 L2067.0,1179.1 L2068.4,1163.0 L2069.7,1180.6" stroke="#686c72" stroke-width="1.4" fill="none"/>
<path d="M2071.0,1165.2 L2072.3,1184.6 L2073.7,1168.2 L2075.0,1180.1 L2076.4,1164.0 L2077.7,1182.4 L2079.1,1168.9 L2080.4,1182.9 L2081.8,1168.6 L2083.1,1179.9 L2084.5,1170.8 L2085.8,1182.9 L2087.2,1164.9 L2088.5,1182.0 L2089.9,1164.8 L2091.2,1178.0 L2092.6,1169.5 L2093.9,1180.8 L2095.3,1165.1 L2096.6,1183.6 L2098.0,1168.7 L2099.3,1179.2 L2100.7,1168.5 L2102.0,1180.6 L2103.4,1165.7 L2104.7,1178.7" stroke="#e48bc8" stroke-width="1.4" fill="none"/>
<rect x="502" y="1243" width="399" height="14.6" rx="7.3" fill="#c8c8c8"/>
</g>
</svg>
<div class="t" id="ttl" style="left:281.00px;top:88.00px;font-size:17.81px;color:#000;transform:scaleX(0.9646);font-weight:400;">Test | Descript</div>
<div class="t" id="mFile" style="left:250.51px;top:123.00px;font-size:18.50px;color:#000;transform:scaleX(0.8893);font-weight:400;">File</div>
<div class="t" id="mEdit" style="left:295.27px;top:123.00px;font-size:18.50px;color:#000;transform:scaleX(0.9290);font-weight:400;">Edit</div>
<div class="t" id="mIns" style="left:345.07px;top:123.00px;font-size:18.50px;color:#000;transform:scaleX(0.9348);font-weight:400;">Insert</div>
<div class="t" id="mFmt" style="left:407.85px;top:123.00px;font-size:18.50px;color:#000;transform:scaleX(0.9483);font-weight:400;">Format</div>
<div class="t" id="mCtl" style="left:481.82px;top:123.00px;font-size:18.50px;color:#000;transform:scaleX(0.9809);font-weight:400;">Controls</div>
<div class="t" id="mView" style="left:568.00px;top:123.00px;font-size:18.50px;color:#000;transform:scaleX(0.9450);font-weight:400;">View</div>
<div class="t" id="mWin" style="left:625.30px;top:123.00px;font-size:18.50px;color:#000;transform:scaleX(0.9848);font-weight:400;">Window</div>
<div class="t" id="mHelp" style="left:708.63px;top:123.00px;font-size:18.50px;color:#000;transform:scaleX(0.9730);font-weight:400;">Help</div>
<div class="t" id="hTest" style="left:343.00px;top:181.50px;font-size:19.57px;color:#222;transform:scaleX(0.9722);font-weight:400;-webkit-text-stroke:0.45px currentColor;">Test</div>
<div class="t" id="tc" style="left:1040.05px;top:169.00px;font-size:48.57px;color:#d9d9d9;transform:scaleX(0.9747);font-weight:400;">0:00:00</div>
<div class="t" id="tc2" style="left:1195.10px;top:181.00px;font-size:34.29px;color:#222;transform:scaleX(0.9682);font-weight:400;">.00</div>
<div class="t" id="rfa" style="left:1287.00px;top:173.00px;font-size:15.07px;color:#8a8a8a;transform:scaleX(1.0000);font-weight:400;">Reading from the article</div>
<div class="t" id="share" style="left:1856.02px;top:181.80px;font-size:19.30px;color:#9b9b9b;transform:scaleX(0.9800);font-weight:400;">Share</div>
<div class="t" id="saved" style="left:2012.02px;top:181.80px;font-size:19.30px;color:#9b9b9b;transform:scaleX(0.9811);font-weight:400;">Saved</div>
<div class="t" id="dj" style="left:2131.04px;top:179.00px;font-size:21.74px;color:#fff;transform:scaleX(0.9615);font-weight:700;">DJ</div>
<div class="t" id="sb1" style="left:306.52px;top:337.00px;font-size:19.18px;color:#5e5e5e;transform:scaleX(1.0832);font-weight:400;">Untitl...osition</div>
<div class="t" id="sb2" style="left:306.53px;top:381.40px;font-size:18.11px;color:#0d5dfc;transform:scaleX(1.0683);font-weight:400;-webkit-text-stroke:0.45px currentColor;">Readin...article</div>
<div class="t" id="sb3" style="left:307.60px;top:426.60px;font-size:18.63px;color:#c6c6c6;transform:scaleX(1.0512);font-weight:400;">Add new...</div>
<div class="t" id="em" style="left:560.45px;top:262.00px;font-size:18.92px;color:#111;transform:scaleX(1.0461);font-weight:400;-webkit-text-stroke:0.45px currentColor;">Edit Media</div>
<div class="t" id="dtitle" style="left:948.48px;top:399.20px;font-size:35.89px;color:#111;transform:scaleX(1.0058);font-weight:400;">Reading from the article</div>
<div class="t" id="ts" style="left:927.00px;top:457.40px;font-size:14.29px;color:#c4c4c4;transform:scaleX(1.0278);font-weight:400;">00:00</div>
<div class="t" id="dave" style="left:865.03px;top:483.00px;font-size:19.29px;color:#d9318f;transform:scaleX(0.9705);font-weight:400;-webkit-text-stroke:0.60px currentColor;">Dave</div>
<div class="t" id="l1" style="left:950.01px;top:479.10px;font-size:24.20px;color:#1862fb;transform:scaleX(0.9947);font-weight:400;">One of the biggest innovations in voice cloning has been the overall</div>
<div class="t" id="l2" style="left:950.02px;top:524.50px;font-size:24.20px;color:#1862fb;transform:scaleX(0.9819);font-weight:400;">reduction in how much raw data is needed to make a voice. In years past,</div>
<div class="t" id="l3" style="left:950.02px;top:568.90px;font-size:24.20px;color:#1862fb;transform:scaleX(0.9832);font-weight:400;">systems needed dozens or even hundreds of hours of audio. Now</div>
<div class="t" id="l4" style="left:950.00px;top:613.30px;font-size:24.20px;color:#1862fb;transform:scaleX(0.9975);font-weight:400;">competent voices can be generated with just minutes of content.</div>
<div class="t" id="r0" style="left:608.70px;top:1031.00px;font-size:15.70px;color:#8a8a8a;transform:scaleX(0.8973);font-weight:400;">-00:00.500</div>
<div class="t" id="r1" style="left:824.00px;top:1031.00px;font-size:15.70px;color:#333;transform:scaleX(0.8914);font-weight:400;">00:00.000</div>
<div class="t" id="r2" style="left:1038.40px;top:1031.00px;font-size:15.70px;color:#8a8a8a;transform:scaleX(0.8943);font-weight:400;">00:00.500</div>
<div class="t" id="r3" style="left:1254.70px;top:1031.00px;font-size:15.70px;color:#8a8a8a;transform:scaleX(0.8886);font-weight:400;">00:01.000</div>
<div class="t" id="r4" style="left:1468.80px;top:1031.00px;font-size:15.70px;color:#8a8a8a;transform:scaleX(0.8957);font-weight:400;">00:01.500</div>
<div class="t" id="r5" style="left:1685.30px;top:1031.00px;font-size:15.70px;color:#8a8a8a;transform:scaleX(0.8843);font-weight:400;">00:02.000</div>
<div class="t" id="r6" style="left:1901.00px;top:1031.00px;font-size:15.70px;color:#8a8a8a;transform:scaleX(0.8914);font-weight:400;">00:02.500</div>
<div class="t" id="w1" style="left:861.00px;top:1079.80px;font-size:19.50px;color:#dc2a95;transform:scaleX(0.9595);font-weight:400;-webkit-text-stroke:0.60px currentColor;">One</div>
<div class="t" id="w2" style="left:995.70px;top:1080.00px;font-size:19.50px;color:#dc2a95;transform:scaleX(1.0765);font-weight:400;-webkit-text-stroke:0.60px currentColor;-webkit-mask-image:linear-gradient(to right,#000 45%,rgba(0,0,0,0.15) 100%);mask-image:linear-gradient(to right,#000 45%,rgba(0,0,0,0.15) 100%);">of</div>
<div class="t" id="w3" style="left:1035.20px;top:1080.00px;font-size:19.50px;color:#dc2a95;transform:scaleX(1.1125);font-weight:400;-webkit-text-stroke:0.60px currentColor;-webkit-mask-image:linear-gradient(to right,#000 45%,rgba(0,0,0,0.15) 100%);mask-image:linear-gradient(to right,#000 45%,rgba(0,0,0,0.15) 100%);">th</div>
<div class="t" id="w4" style="left:1089.16px;top:1080.00px;font-size:19.50px;color:#dc2a95;transform:scaleX(1.0413);font-weight:400;-webkit-text-stroke:0.60px currentColor;">biggest</div>
<div class="t" id="w5" style="left:1264.76px;top:1080.00px;font-size:19.50px;color:#dc2a95;transform:scaleX(1.0429);font-weight:400;-webkit-text-stroke:0.60px currentColor;">innovations</div>
<div class="t" id="w6" style="left:1549.66px;top:1080.00px;font-size:19.50px;color:#dc2a95;transform:scaleX(1.1357);font-weight:400;-webkit-text-stroke:0.60px currentColor;">in</div>
<div class="t" id="w7" style="left:1606.60px;top:1080.00px;font-size:19.50px;color:#dc2a95;transform:scaleX(1.0089);font-weight:400;-webkit-text-stroke:0.60px currentColor;">voice</div>
<div class="t" id="w8" style="left:1750.50px;top:1080.00px;font-size:19.50px;color:#dc2a95;transform:scaleX(1.0607);font-weight:400;-webkit-text-stroke:0.60px currentColor;">cloning</div>
<div class="t" id="w9" style="left:1935.66px;top:1080.00px;font-size:19.50px;color:#dc2a95;transform:scaleX(0.9419);font-weight:400;-webkit-text-stroke:0.60px currentColor;">has</div>
<div class="t" id="w10" style="left:2004.57px;top:1080.00px;font-size:19.50px;color:#dc2a95;transform:scaleX(1.0286);font-weight:400;-webkit-text-stroke:0.60px currentColor;">been</div>
<div class="t" id="w11" style="left:2080.00px;top:1080.00px;font-size:19.50px;color:#dc2a95;transform:scaleX(1.1875);font-weight:400;-webkit-text-stroke:0.60px currentColor;-webkit-mask-image:linear-gradient(to right,#000 45%,rgba(0,0,0,0.15) 100%);mask-image:linear-gradient(to right,#000 45%,rgba(0,0,0,0.15) 100%);">th</div>
<div class="t" id="dur" style="left:859.11px;top:1120.80px;font-size:16.00px;color:#8a8a8a;transform:scaleX(0.8947);font-weight:400;">6.45s</div>
<svg width="2488" height="1399" viewBox="0 0 2488 1399" style="left:0;top:0;pointer-events:none">
<defs>
<linearGradient id="gapp" x1="0" y1="0" x2="0" y2="1"><stop offset="0" stop-color="#1f83ff"/><stop offset="1" stop-color="#0a56e8"/></linearGradient>
<clipPath id="dclip"><path d="M0,2 Q0,0 2,0 L11,0 A15,15 0 0 1 11,30 L2,30 Q0,30 0,28 Z"/></clipPath>

</defs>
<!-- title app icon -->
<rect x="252" y="82" width="24" height="24" rx="4.5" fill="url(#gapp)"/>
<g transform="translate(258.30,86.90) scale(0.4692,0.4700)" fill="#fff">
 <g clip-path="url(#dclip)">
  <rect x="-1" y="-1" width="30" height="5.9"/>
  <rect x="-6" y="8.1" width="12.9" height="4.9" rx="2.45"/>
  <rect x="11" y="8.1" width="20" height="4.9" rx="2.45"/>
  <rect x="-6" y="17" width="19" height="4.9" rx="2.45"/>
  <rect x="18" y="17" width="15" height="4.9" rx="2.45"/>
  <rect x="-1" y="25.1" width="30" height="6"/>
 </g>
</g>
<!-- window controls -->
<g stroke="#000" stroke-width="1.1" fill="none">
 <line x1="1999" y1="94.5" x2="2014" y2="94.5"/>
 <rect x="2068.7" y="87.6" width="13.8" height="13.8"/>
 <line x1="2139" y1="87.5" x2="2154" y2="102.5"/><line x1="2154" y1="87.5" x2="2139" y2="102.5"/>
</g>
<!-- header logo -->
<g transform="translate(267.00,175.00) scale(1.0000,1.0000)" fill="#0a5cff">
 <g clip-path="url(#dclip)">
  <rect x="-1" y="-1" width="30" height="5.9"/>
  <rect x="-6" y="8.1" width="12.9" height="4.9" rx="2.45"/>
  <rect x="11" y="8.1" width="20" height="4.9" rx="2.45"/>
  <rect x="-6" y="17" width="19" height="4.9" rx="2.45"/>
  <rect x="18" y="17" width="15" height="4.9" rx="2.45"/>
  <rect x="-1" y="25.1" width="30" height="6"/>
 </g>
</g>
<polyline points="405.5,186.5 410.8,192 416,186.5" fill="none" stroke="#8a8a8a" stroke-width="1.6"/>
<!-- transport -->
<g stroke="#444" stroke-width="2.4" fill="none" stroke-linejoin="miter">
 <path id="rew" d="M741.1,180.9 L735.9,186.2 L741.1,191.5 M747.2,180.9 L742.2,186.2 L747.2,191.5 M742.5,186.1 H750.7 A6.1,6.1 0 0 1 750.7,198.3 H743.5"/>
 <path transform="translate(1612.9,0) scale(-1,1)" d="M741.1,180.9 L735.9,186.2 L741.1,191.5 M747.2,180.9 L742.2,186.2 L747.2,191.5 M742.5,186.1 H750.7 A6.1,6.1 0 0 1 750.7,198.3 H743.5"/>
 <path d="M926.5,186 V192.5"/>
 <circle cx="926.5" cy="197" r="4.2" stroke-width="2.7"/>
 <rect x="981.7" y="177.3" width="8.3" height="13.6" rx="4.15" stroke-width="2.5"/>
 <path d="M979.4,189 A6.4,6.4 0 0 0 992.2,189 M985.8,195.5 V201.5" stroke-width="2.5"/>
</g>
<path d="M799,182.2 Q799,179.6 801.2,181 L812.6,188.2 Q814.6,189.5 812.6,190.8 L801.2,198 Q799,199.4 799,196.8 Z" fill="#444"/>
<g fill="#444">
 <rect x="925" y="175.9" width="3" height="3"/><rect x="916" y="180.4" width="3" height="3"/><rect x="934" y="180.4" width="3" height="3"/>
 <rect x="913" y="189.4" width="3" height="3"/><rect x="937.1" y="189.4" width="3" height="3"/>
 <rect x="982" y="200.2" width="8" height="2.8"/>
</g>
<!-- meter -->
<path d="M1451.9,176 L1462.2,176 L1457,181.8 Z" fill="#9a9a9a"/>
<!-- share / saved icons -->
<g stroke="#9b9b9b" stroke-width="2.5" fill="none" stroke-linejoin="round">
 <path d="M1819.6,191.5 L1832.4,179 L1845.8,191.5 M1822.6,188.5 V200.8 H1843 V188.5"/>
 <path d="M1974,201.8 H1992 A7,7 0 0 0 1994,188 A10,10 0 0 0 1975,184.5 A8.5,8.5 0 0 0 1974,201.8 Z"/>
</g>
<rect x="1830.6" y="192.5" width="4.2" height="8.5" fill="#9b9b9b"/>
<!-- sidebar icons -->
<g stroke="#919191" stroke-width="2.8" fill="none" stroke-linejoin="round">
 <path d="M265.1,264.4 H291.9 M265.1,273.5 H291.9 M265.1,282.5 H291.9" stroke-linejoin="miter"/>
 <circle cx="320.2" cy="271.2" r="8.3" stroke-width="2.9"/>
 <path d="M325.8,277.3 L332.8,284.6" stroke-width="3.3"/>
 <path d="M359.9,264.3 H356.4 Q353.9,264.3 353.9,266.8 V282.8 Q353.9,285.3 356.4,285.3 H369.2 Q371.7,285.3 371.7,282.8 V279.3" stroke-width="2.7"/>
 <path d="M362.4,258.5 H370 L378,266.3 V276.8 Q378,279.3 375.5,279.3 H362.4 Q359.9,279.3 359.9,276.8 V261 Q359.9,258.5 362.4,258.5 Z" stroke-width="2.7"/>
 <path d="M364.6,269.5 H373.1 M364.6,274 H373.1" stroke-width="2.4" stroke-linejoin="miter"/>
 <path d="M398.9,261.4 H408 Q409.4,261.4 409.4,262.8 V284.2 Q409.4,285.6 408,285.6 H398.9 Q397.5,285.6 397.5,284.2 V262.8 Q397.5,261.4 398.9,261.4 Z M403.5,262 V285" stroke-width="2.6"/>
 <path d="M418,261.5 L423.6,263.7 L415.6,285.6 L411.6,284 Z" stroke-width="2.6" stroke-linejoin="miter"/>
</g>
<!-- doc icons -->
<g stroke-width="3" fill="none" stroke-linejoin="round">
 <path d="M271.5,332.8 H280.5 L290.5,342.5 V356.3 Q290.5,358.3 288.5,358.3 H271.5 Q269.5,358.3 269.5,356.3 V334.8 Q269.5,332.8 271.5,332.8 Z" stroke="#909090"/>
 <path d="M274.1,343.3 H285.9 M274.1,347.9 H285.9 M274.1,352.4 H285.9" stroke="#909090" stroke-width="2.6" stroke-linejoin="miter"/>
 <path d="M271.5,376.9 H280.5 L290.5,386.6 V399.2 Q290.5,401.2 288.5,401.2 H271.5 Q269.5,401.2 269.5,399.2 V378.9 Q269.5,376.9 271.5,376.9 Z" stroke="#0a5cff"/>
 <path d="M274.1,387.5 H285.9 M274.1,391.9 H285.9 M274.1,396.3 H285.9" stroke="#0a5cff" stroke-width="2.6" stroke-linejoin="miter"/>
 <path d="M280.5,423 V443.9 M270,433.5 H291" stroke="#c8c8c8" stroke-width="3" stroke-linejoin="miter"/>
</g>
<!-- editor toolbar -->
<g fill="none" stroke-linejoin="miter">
 <path d="M523,280 L522.5,273.5 L538.5,257.5 L544,263 L528,279 Z M533.5,262.5 L539,268" stroke="#000" stroke-width="2.8"/>
 <polyline points="673.3,266.2 678.7,261.8 684.1,266.2" stroke="#999" stroke-width="1.5"/>
 <polyline points="673.3,271.2 678.7,275.6 684.1,271.2" stroke="#999" stroke-width="1.5"/>
 <path d="M1080.5,258 V279 M1070,268.5 H1091" stroke="#555" stroke-width="3"/>
 <polyline points="1100,265.5 1105,270.5 1110,265.5" stroke="#555" stroke-width="1.8"/>
 <polyline points="1182,265.5 1187.4,270.5 1192.8,265.5" stroke="#555" stroke-width="1.8"/>
</g>
<g fill="#e2e2e2"><rect x="1130" y="251" width="1.5" height="36"/><rect x="1211" y="251" width="1.5" height="36"/><rect x="1429.5" y="251" width="1.5" height="36"/><rect x="1491.2" y="251" width="1.5" height="36"/></g>
<path d="M1150.6,276.6 L1159.6,267.6 Q1157.6,262.2 1161,259.2 Q1163.6,257 1166.6,257.6 L1164.2,262.6 L1167.6,265.8 L1171.6,263.6 Q1173.8,266.6 1171.2,269.6 Q1168.2,272.2 1163.6,271.2 L1154.6,280.2 Q1152.4,282.2 1150.6,280 Q1149,278.4 1150.6,276.6 Z" fill="none" stroke="#5a5a5a" stroke-width="2.6" stroke-linejoin="round"/>
<g stroke="#dedede" fill="none">
 <path d="M1229.1,268.5 H1255.8" stroke-width="2.5"/>
 <path d="M1247.6,263.2 Q1246.5,259.3 1241.8,259.3 Q1235.8,259.3 1235.8,263.8 Q1235.8,266 1238,267" stroke-width="3"/>
 <path d="M1248.3,272.2 Q1249.8,273.5 1249.6,275.5 Q1249,279 1242,279 Q1235,279 1234.2,274.3" stroke-width="3"/>
 <path d="M1340,259.5 H1354.5 M1338,278 H1352.5 M1349,259.5 L1343.5,278" stroke-width="2.6"/>
 <rect x="1387.6" y="256.3" width="23.6" height="23.9" rx="2.8" stroke-width="2.65" fill="#fff"/>
 <path d="M1472.5,266.5 A6.2,6.2 0 0 0 1463.7,257.7 L1453,268.4 A6.2,6.2 0 0 0 1461.8,277.2 L1469.5,269.5 A3.5,3.5 0 0 0 1464.5,264.5 L1458.3,270.7" stroke-width="2.6"/>
</g>
<rect x="1392" y="261" width="15.2" height="14.9" fill="#fef8ec"/>
<text x="1286" y="279" font-family="Liberation Sans" font-weight="700" font-size="29" fill="#dedede">B</text>
<g fill="none" stroke="#5a5a5a" stroke-width="2.8" stroke-linejoin="round">
 <path d="M1513.4,256.4 H1531.4 Q1534.4,256.4 1534.4,259.4 V274.4 Q1534.4,277.4 1531.4,277.4 H1526.6 L1522.4,282.8 L1518.2,277.4 H1513.4 Q1510.4,277.4 1510.4,274.4 V259.4 Q1510.4,256.4 1513.4,256.4 Z"/>
 <path d="M1522.4,262.4 V271.4 M1518,266.9 H1526.9" stroke-width="2.5" stroke-linejoin="miter"/>
</g>
<!-- right rail -->
<g fill="none" stroke="#919191" stroke-width="2.6">
 <rect x="2132.7" y="260.7" width="24.5" height="24.7" rx="2.5"/>
 <path d="M2137,278.7 H2152.8" stroke-width="3.4"/>
 <path d="M2141.5,312.5 H2158.5 M2131.4,321.5 H2148 M2141.5,330.5 H2158.5"/>
 <circle cx="2135.5" cy="312.5" r="3.2" stroke-width="2.4"/><circle cx="2153.5" cy="321.5" r="3.2" stroke-width="2.4"/><circle cx="2135.5" cy="330.5" r="3.2" stroke-width="2.4"/>
 <path d="M2135,355.3 H2155 Q2157.6,355.3 2157.6,357.9 V374.9 Q2157.6,377.5 2155,377.5 H2149 L2145,382.5 L2141,377.5 H2135 Q2132.4,377.5 2132.4,374.9 V357.9 Q2132.4,355.3 2135,355.3 Z" stroke-linejoin="round"/>
 <circle cx="2144.6" cy="1226.4" r="11.9" stroke-width="2.9"/>
 <path d="M2142.3,1224.8 Q2142.3,1222.2 2145.2,1222.2 Q2148.2,1222.2 2148.2,1224.4 Q2148.2,1226.2 2146.3,1227 Q2144.8,1227.8 2144.8,1229" stroke-width="2.7"/>
</g>
<g fill="#919191"><circle cx="2140" cy="366" r="1.3"/><circle cx="2145" cy="366" r="1.3"/><circle cx="2150" cy="366" r="1.3"/></g>
<circle cx="2144.6" cy="1231.3" r="1.7" fill="#919191"/>
<path d="M809.8,1030 H830.1 V1042 L820,1049.8 L809.8,1042 Z" fill="#0a5cff"/>
<rect x="819" y="1045" width="2.1" height="225" fill="#0a5cff"/>
<rect x="819.8" y="1027" width="1.4" height="4" fill="#111"/>
<!-- text cursor -->
<rect x="945.1" y="473" width="3.3" height="30" fill="#0a5cff"/>
<rect x="950" y="473" width="1.1" height="30" fill="#0a5cff"/>
<rect x="944" y="500.2" width="7" height="5.6" fill="#0a5cff"/>
</svg>
</div></div>
</body></html>
